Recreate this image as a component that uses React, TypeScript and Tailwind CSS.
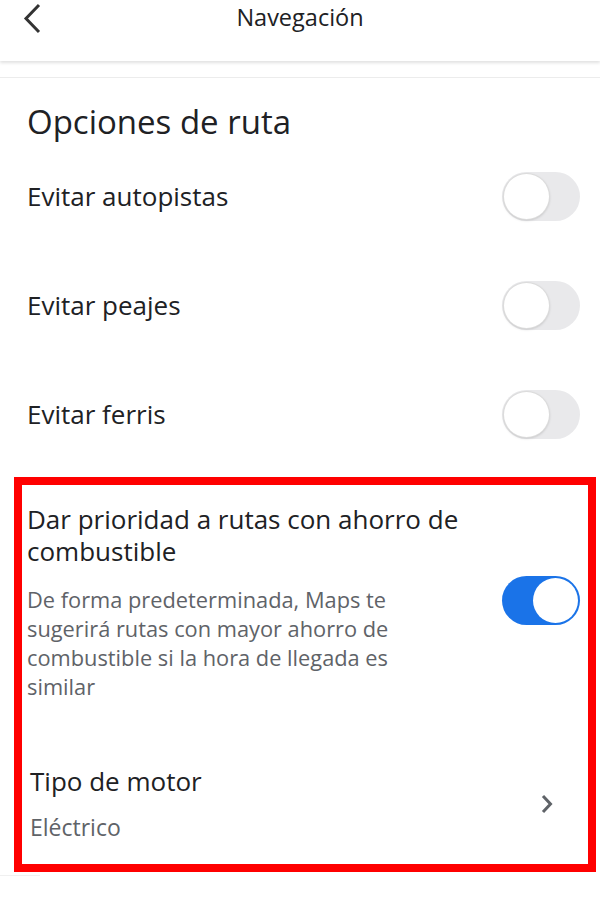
import { useState } from "react";

interface ToggleProps {
  on: boolean;
  onChange: () => void;
}

function Toggle({ on, onChange }: ToggleProps) {
  return (
    <button
      type="button"
      onClick={onChange}
      className={`flex h-[49px] w-[78px] flex-shrink-0 items-center rounded-full p-[2px] transition-colors ${
        on ? "justify-end bg-[#1a73e8]" : "justify-start bg-[#e9e9eb]"
      }`}
    >
      <span
        className={`h-[45px] w-[45px] rounded-full bg-white ${
          on ? "" : "shadow-[0_1px_3px_rgba(0,0,0,0.25)] ring-1 ring-[#dcdcdc]"
        }`}
      />
    </button>
  );
}

interface SwitchRowProps {
  label: string;
  on: boolean;
  onChange: () => void;
}

function SwitchRow({ label, on, onChange }: SwitchRowProps) {
  return (
    <div className="flex h-[109px] items-center justify-between pl-[27px] pr-5">
      <span className="text-[26px] text-[#202124]">{label}</span>
      <Toggle on={on} onChange={onChange} />
    </div>
  );
}

export default function App() {
  const [avoid, setAvoid] = useState({ highways: false, tolls: false, ferries: false });
  const [ecoRoutes, setEcoRoutes] = useState(true);

  return (
    <div
      className="h-[897px] w-[600px] overflow-hidden bg-white"
      style={{ fontFamily: "'Open Sans', Roboto, sans-serif" }}
    >
      <header className="relative z-10 grid h-[61px] grid-cols-[80px_1fr_80px] items-center shadow-[0_2px_3px_rgba(0,0,0,0.12)]">
        <button type="button" className="flex h-full items-center pl-[20px] pb-[27px]">
          <svg width="24" height="32" viewBox="0 0 24 32" fill="none">
            <path d="M19 3 6 16.5 19 30" stroke="#333" strokeWidth="3" />
          </svg>
        </button>
        <h1 className="pb-[28px] text-center text-[23.5px] text-[#202124]">Navegación</h1>
        <div />
      </header>

      <div className="h-[17px] border-b border-[#ececec]" />

      <h2 className="flex h-[64px] items-center pl-[27px] pt-[24px] text-[33px] text-[#202124]">
        Opciones de ruta
      </h2>

      <SwitchRow
        label="Evitar autopistas"
        on={avoid.highways}
        onChange={() => setAvoid({ ...avoid, highways: !avoid.highways })}
      />
      <SwitchRow
        label="Evitar peajes"
        on={avoid.tolls}
        onChange={() => setAvoid({ ...avoid, tolls: !avoid.tolls })}
      />
      <SwitchRow
        label="Evitar ferris"
        on={avoid.ferries}
        onChange={() => setAvoid({ ...avoid, ferries: !avoid.ferries })}
      />

      <section className="ml-[14px] mt-[8px] h-[395px] w-[582px] border-[8px] border-[#ff0000]">
        <div className="pl-[5px] pt-[18px]">
          <p className="text-[26px] leading-[32px] text-[#202124]">
            Dar prioridad a rutas con ahorro de
            <br />
            combustible
          </p>
          <div className="mt-[9px] flex items-start justify-between pr-[8px]">
            <p className="w-[412px] pt-[9px] text-[21.8px] leading-[29px] text-[#5f6368]">
              De forma predeterminada, Maps te sugerirá rutas con mayor ahorro de
              combustible si la hora de llegada es similar
            </p>
            <Toggle on={ecoRoutes} onChange={() => setEcoRoutes(!ecoRoutes)} />
          </div>
        </div>

        <button
          type="button"
          className="mt-[64px] flex w-full items-center justify-between pl-[8px] pr-[34px] text-left"
        >
          <div className="flex flex-col">
            <span className="text-[26px] leading-[32px] text-[#202124]">Tipo de motor</span>
            <span className="mt-[16px] text-[23px] leading-[29px] text-[#5f6368]">Eléctrico</span>
          </div>
          <svg width="14" height="20" viewBox="0 0 14 20" fill="none">
            <path d="M3 2l7.5 8L3 18" stroke="#5f6368" strokeWidth="3" />
          </svg>
        </button>
      </section>

      <div className="mt-[3px] h-px w-[40px] bg-[#f0f0f0]" />
    </div>
  );
}
